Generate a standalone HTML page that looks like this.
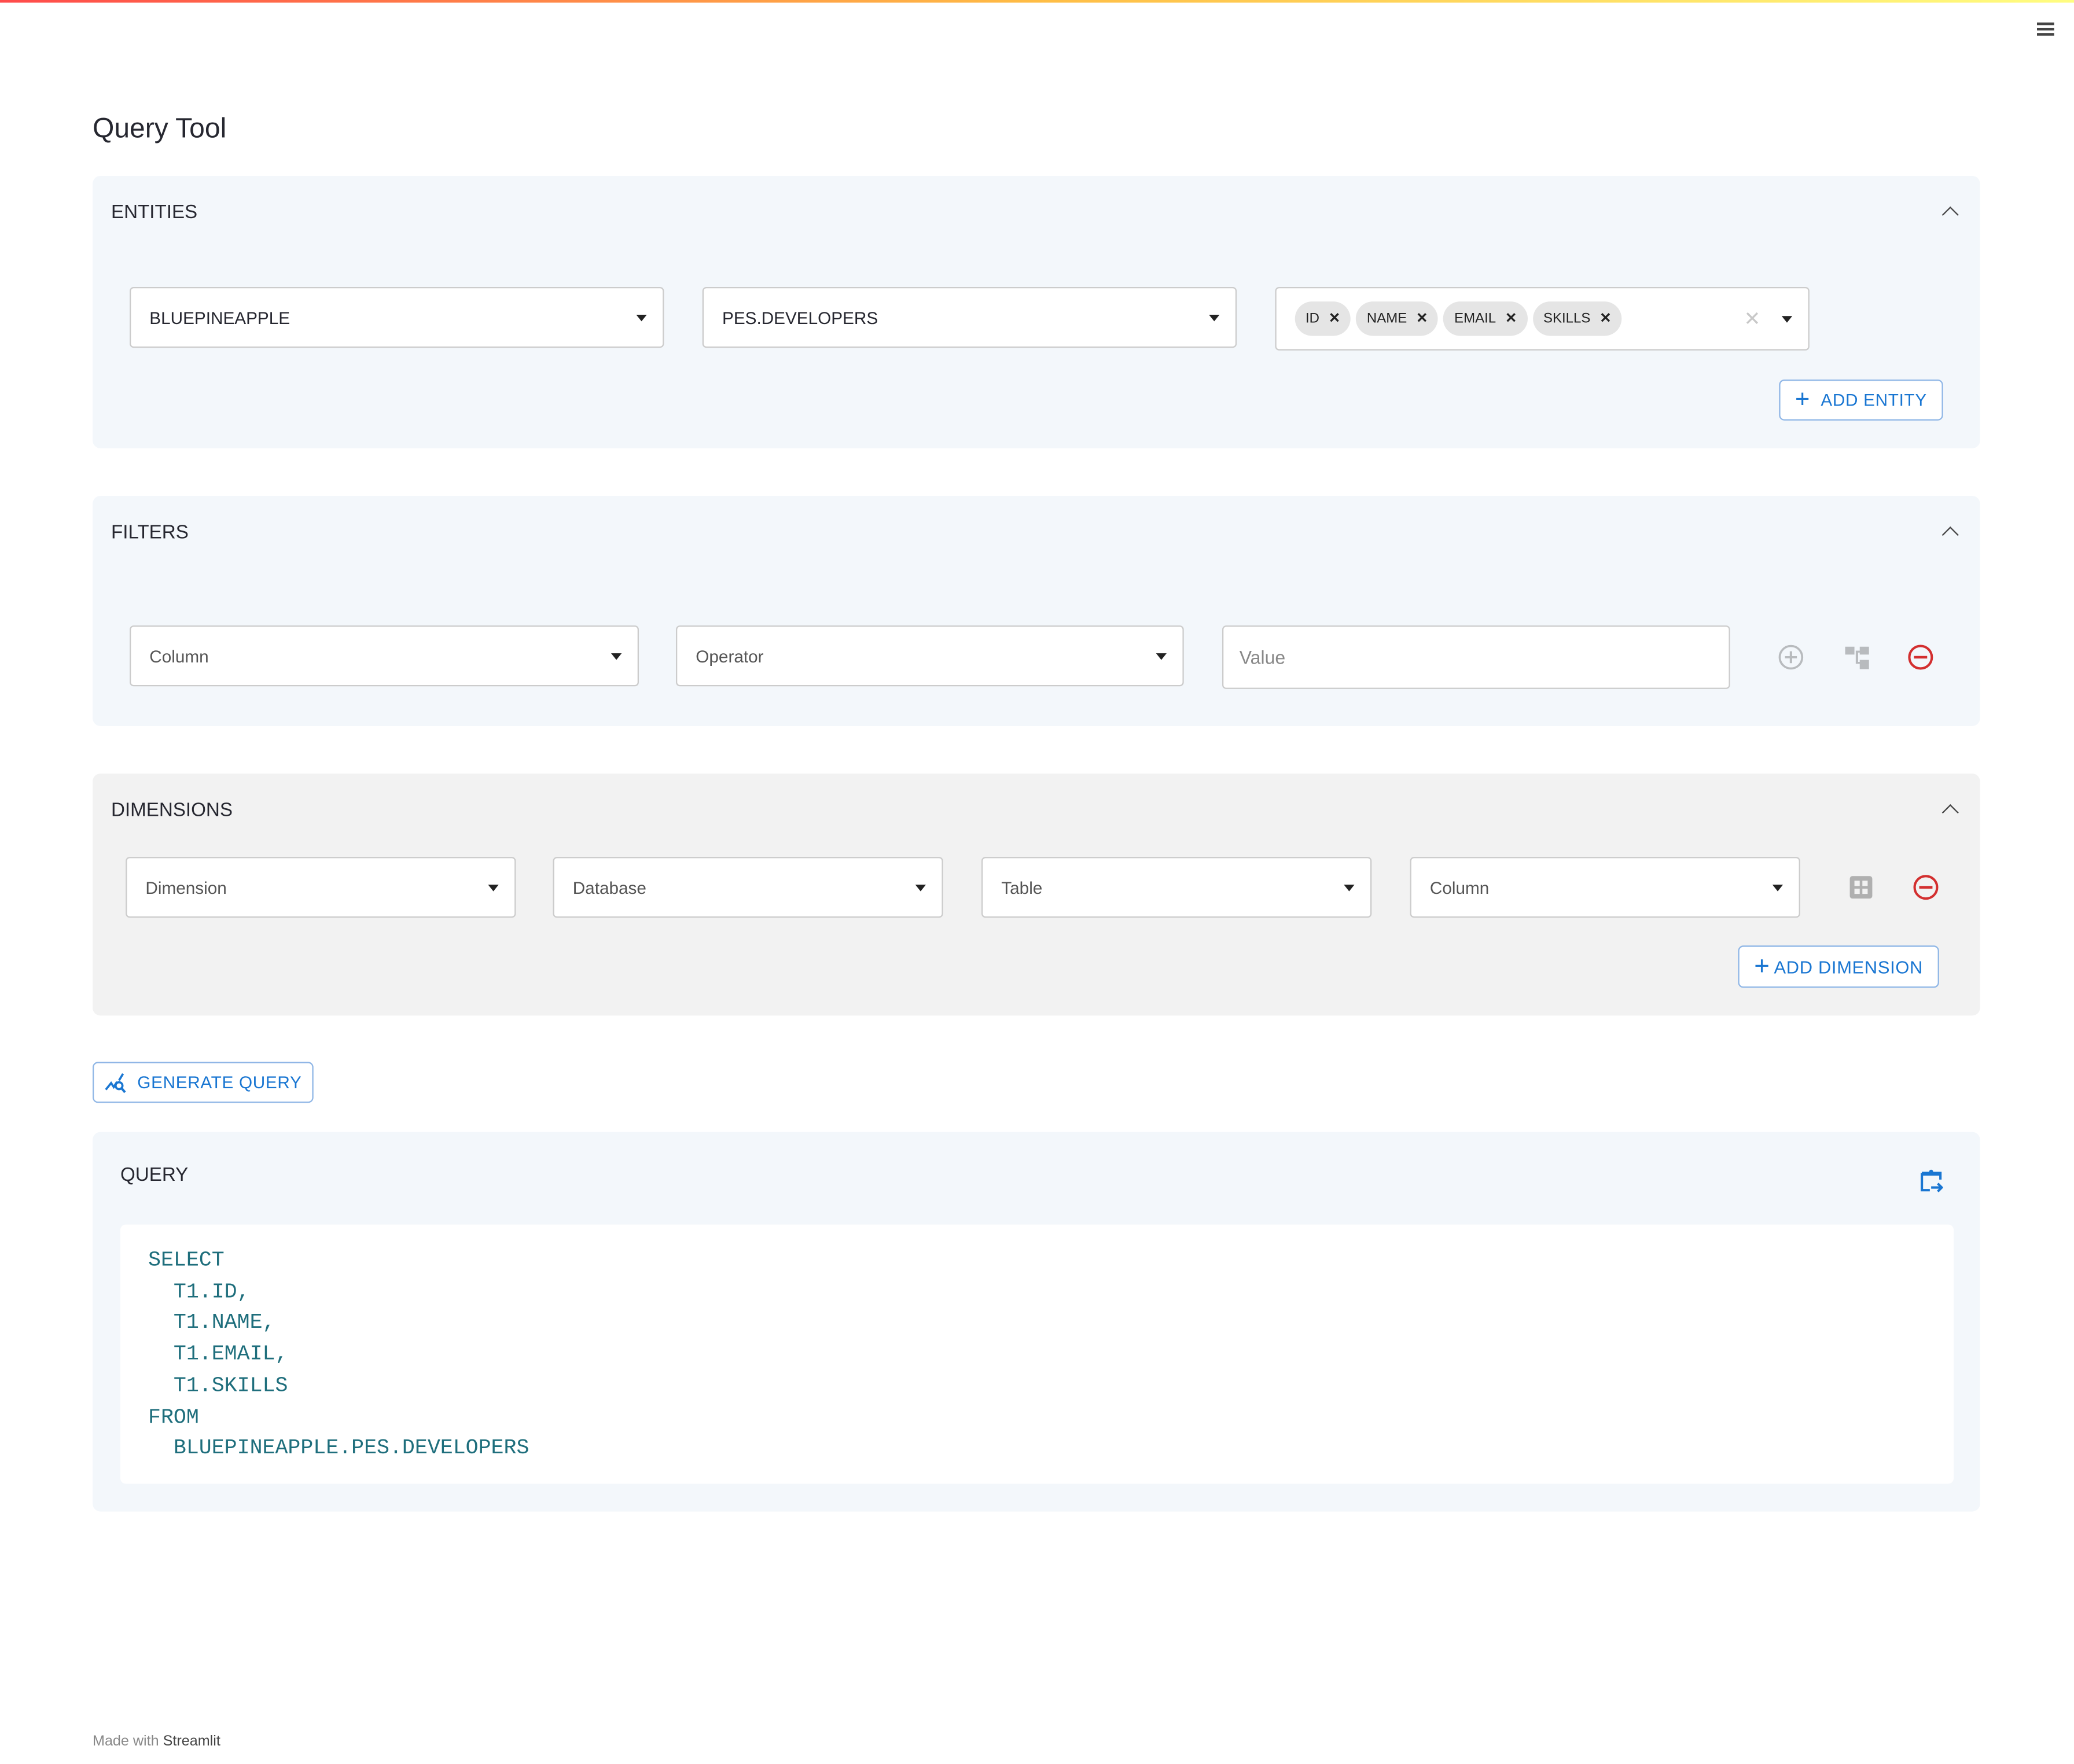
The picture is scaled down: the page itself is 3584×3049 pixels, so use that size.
<!DOCTYPE html>
<html><head><meta charset="utf-8"><style>
html,body{margin:0;padding:0;background:#fff;width:3584px;height:3048px;overflow:hidden}
#r{position:absolute;left:0;top:0;width:1568px;height:1334px;transform:scale(2.285714);transform-origin:0 0;font-family:"Liberation Sans",sans-serif;color:#262730}
.a{position:absolute}
.bar{left:0;top:0;width:1568px;height:2px;background:linear-gradient(90deg,#ff4b4b,#ffbd45,#fffd80)}
.panel{position:absolute;left:70px;width:1427px;border-radius:6px;background:#f3f7fb}
.h{position:absolute;left:14px;font-size:14.5px;color:#262730}
.chev{position:absolute;right:18px;width:8px;height:8px;border-left:1.6px solid #444;border-top:1.6px solid #444;transform:rotate(45deg)}
.sel{position:absolute;background:#fff;border:1px solid #ccc;border-radius:3px;box-sizing:border-box;font-size:13px;display:flex;align-items:center;padding-left:14px}
.sel .ar{position:absolute;right:12px;top:50%;margin-top:-2px;width:0;height:0;border-left:4.5px solid transparent;border-right:4.5px solid transparent;border-top:5px solid #222}
.ph{color:#555}
.btn{position:absolute;background:#fff;border:1px solid #8fb6e6;border-radius:4px;box-sizing:border-box;color:#1976d2;font-size:13px;display:flex;align-items:center;justify-content:center;letter-spacing:.3px}
.chip{display:inline-flex;align-items:center;height:26px;background:#e5e5e5;border-radius:13px;padding:0 8px;font-size:10.5px;margin-right:4px;color:#222}
.chip b{margin-left:7px;font-size:10.5px}
pre{margin:0;font-family:"Liberation Mono","DejaVu Sans Mono",monospace;font-size:16px;line-height:23.7px;color:#1e6e7c}
</style></head><body><div id="r">
<div class="a bar"></div>
<div class="a" style="left:1540px;top:17px;width:13px;height:2px;background:#444;box-shadow:0 4px 0 #444,0 8px 0 #444"></div>
<div class="a" style="left:70px;top:86px;font-size:21px;color:#262730">Query Tool</div>

<div class="panel" style="top:133px;height:206px">
 <div class="h" style="top:20px">ENTITIES</div><div class="chev" style="top:25px"></div>
</div>
<div class="sel" style="left:98px;top:217px;width:404px;height:46px">BLUEPINEAPPLE<span class="ar"></span></div>
<div class="sel" style="left:531px;top:217px;width:404px;height:46px">PES.DEVELOPERS<span class="ar"></span></div>
<div class="sel" style="left:964px;top:217px;width:404px;height:48px">
 <span class="chip">ID<b>✕</b></span><span class="chip">NAME<b>✕</b></span><span class="chip">EMAIL<b>✕</b></span><span class="chip">SKILLS<b>✕</b></span>
 <span class="a" style="right:36px;top:14px;color:#c8c8c8;font-size:15px">✕</span><span class="ar"></span></div>
<div class="btn" style="left:1345px;top:287px;width:124px;height:31px"><span style="font-size:19px;margin-right:8px;font-weight:300">+</span>ADD ENTITY</div>

<div class="panel" style="top:375px;height:174px">
 <div class="h" style="top:20px">FILTERS</div><div class="chev" style="top:25px"></div>
</div>
<div class="sel" style="left:98px;top:473px;width:385px;height:46px"><span class="ph">Column</span><span class="ar"></span></div>
<div class="sel" style="left:511px;top:473px;width:384px;height:46px"><span class="ph">Operator</span><span class="ar"></span></div>
<div class="sel" style="left:924px;top:473px;width:384px;height:48px;padding-left:12px;font-size:14px"><span style="color:#888">Value</span></div>
<svg class="a" style="left:1344px;top:487px" width="20" height="20" viewBox="0 0 20 20"><circle cx="10" cy="10" r="8.5" fill="none" stroke="#b8bbbe" stroke-width="1.6"/><path d="M10 5.5v9M5.5 10h9" stroke="#b8bbbe" stroke-width="1.8"/></svg>
<svg class="a" style="left:1394px;top:488px" width="20" height="18" viewBox="0 0 20 18"><path fill="#b8bbbe" d="M1 1h7v6H1zM12 1h7v6h-7zM12 11h7v7h-7zM9 4h3v1.5H9zM9 4h1.8v10H9zM9 12.5h3v1.5H9z"/></svg>
<svg class="a" style="left:1442px;top:487px" width="20" height="20" viewBox="0 0 20 20"><circle cx="10" cy="10" r="8.5" fill="none" stroke="#d32f2f" stroke-width="1.8"/><path d="M5 10h10" stroke="#d32f2f" stroke-width="2"/></svg>

<div class="panel" style="top:585px;height:183px;background:#f2f2f2">
 <div class="h" style="top:20px">DIMENSIONS</div><div class="chev" style="top:25px"></div>
</div>
<div class="sel" style="left:95px;top:648px;width:295px;height:46px"><span class="ph">Dimension</span><span class="ar"></span></div>
<div class="sel" style="left:418px;top:648px;width:295px;height:46px"><span class="ph">Database</span><span class="ar"></span></div>
<div class="sel" style="left:742px;top:648px;width:295px;height:46px"><span class="ph">Table</span><span class="ar"></span></div>
<div class="sel" style="left:1066px;top:648px;width:295px;height:46px"><span class="ph">Column</span><span class="ar"></span></div>
<svg class="a" style="left:1398px;top:662px" width="18" height="18" viewBox="0 0 18 18"><rect x="0.5" y="0.5" width="17" height="17" rx="2" fill="#b0b0b0"/><path fill="#f2f2f2" d="M4 4h4v4H4zM10 4h4v4h-4zM4 10h4v4H4zM10 10h4v4h-4z"/></svg>
<svg class="a" style="left:1446px;top:661px" width="20" height="20" viewBox="0 0 20 20"><circle cx="10" cy="10" r="8.5" fill="none" stroke="#d32f2f" stroke-width="1.8"/><path d="M5 10h10" stroke="#d32f2f" stroke-width="2"/></svg>
<div class="btn" style="left:1314px;top:715px;width:152px;height:32px;font-size:13.5px"><span style="font-size:20px;margin-right:3px">+</span>ADD DIMENSION</div>

<div class="btn" style="left:70px;top:803px;width:167px;height:31px;font-size:13px">
<svg width="18" height="16" viewBox="0 0 18 16" style="margin-right:7px"><path d="M1 13l4-5 2 3 2.5-4M11 6l3-5" stroke="#1976d2" stroke-width="1.6" fill="none"/><circle cx="11" cy="10" r="2.6" stroke="#1976d2" stroke-width="1.6" fill="none"/><path d="M13 12l2.5 3" stroke="#1976d2" stroke-width="1.8"/></svg>GENERATE QUERY</div>

<div class="panel" style="top:856px;height:287px">
 <div class="a" style="left:21px;top:25px;font-size:14.5px">QUERY</div>
 <svg class="a" style="left:1381px;top:28px" width="18" height="18" viewBox="0 0 18 18"><path d="M2 3h14v5M2 3v13h6" stroke="#1976d2" stroke-width="1.8" fill="none"/><rect x="2" y="2.5" width="14" height="2.5" fill="#1976d2"/><circle cx="9" cy="2" r="1.5" fill="#1976d2"/><path d="M9 14h8M14 11l3 3-3 3" stroke="#1976d2" stroke-width="1.8" fill="none"/></svg>
 <div class="a" style="left:21px;top:70px;width:1386px;height:196px;background:#fff;border-radius:4px">
<pre style="position:absolute;left:21px;top:16px">SELECT
  T1.ID,
  T1.NAME,
  T1.EMAIL,
  T1.SKILLS
FROM
  BLUEPINEAPPLE.PES.DEVELOPERS</pre>
 </div>
</div>

<div class="a" style="left:70px;top:1311px;font-size:11px;color:#888">Made with <span style="color:#444">Streamlit</span></div>
</div></body></html>
